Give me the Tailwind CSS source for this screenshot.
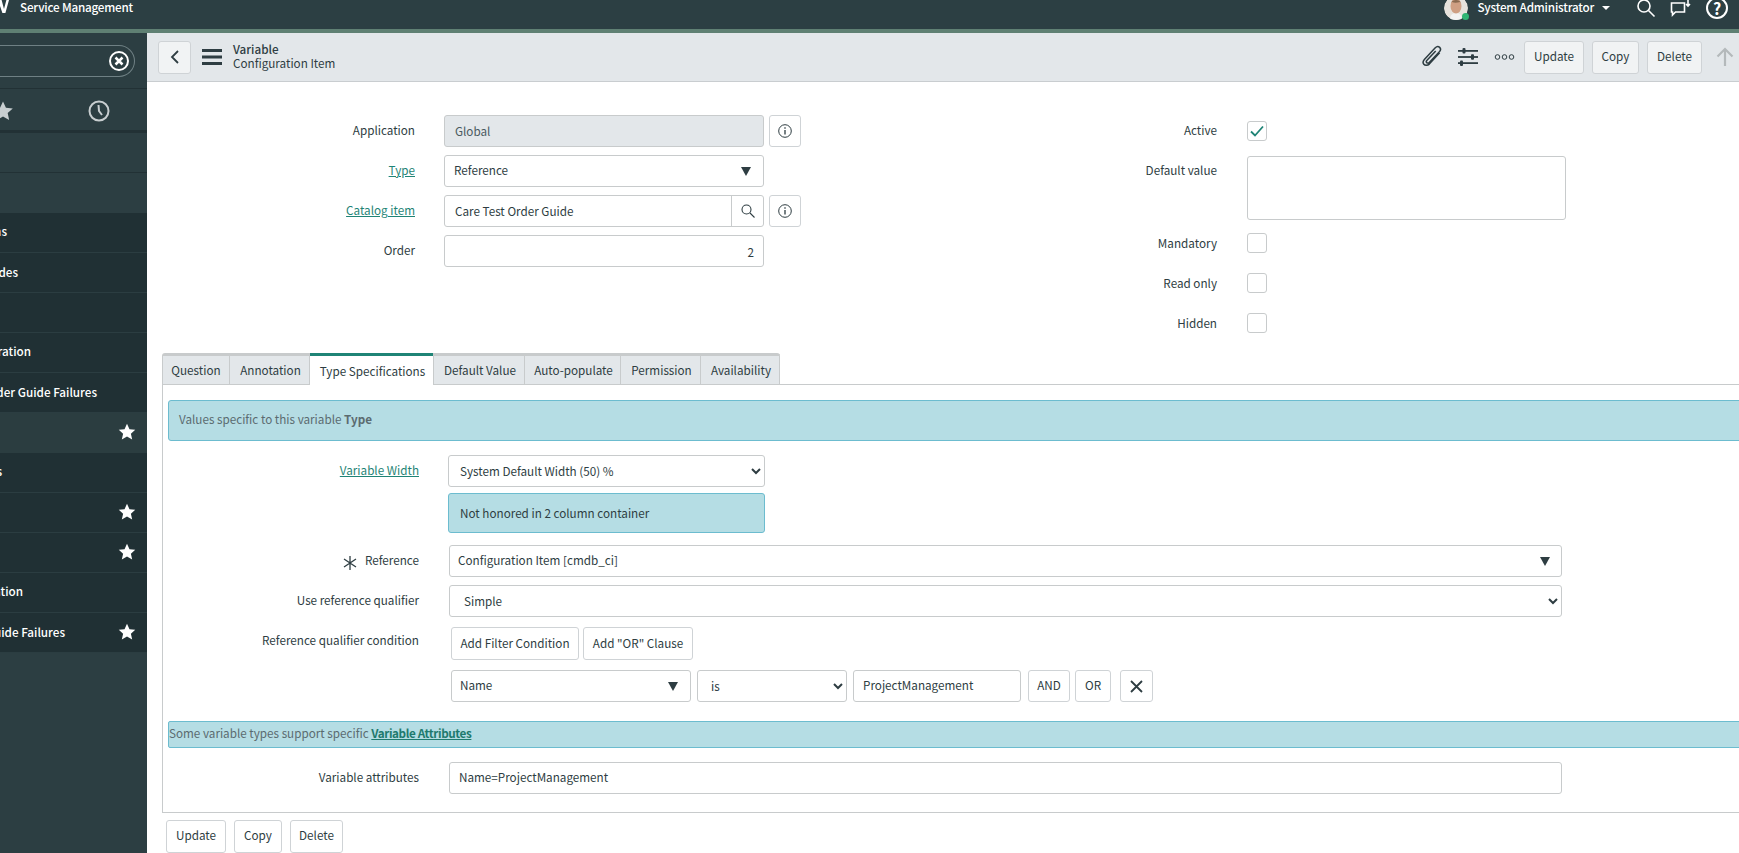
<!DOCTYPE html>
<html lang="en">
<head>
<meta charset="utf-8">
<title>Variable - Configuration Item</title>
<script src="https://cdn.jsdelivr.net/npm/@tailwindcss/browser@4"></script>
</head>
<body class="overflow-hidden">
<div class="w-[1739px] h-[853px] overflow-hidden flex flex-col bg-white text-[#2e3d42] text-[11.7px] leading-[18px] font-['Noto_Sans_CJK_SC','Noto_Sans',sans-serif]">

  <!-- top header -->
  <header class="h-[33px] shrink-0 bg-[#2c3f43] border-b-[4px] border-[#5f8073] overflow-hidden text-white">
    <div class="h-[15px] flex items-center relative">
      <svg class="ml-[-2px] w-[11px] h-[15px] shrink-0" viewBox="0 0 11 15"><path d="M0 0h3.6l2.4 9 2.4-9h2.6l-3.6 13h-3z" fill="#fff"/></svg>
      <span class="ml-[11px] font-medium tracking-[-0.2px] leading-[12px] mt-[-2px]">Service Management</span>
      <div class="ml-auto flex items-center h-[15px]">
        <span class="relative w-[24px] h-[24px] mr-[9px] shrink-0">
          <svg class="w-[24px] h-[24px] rounded-full" viewBox="0 0 24 24"><circle cx="12" cy="12" r="12" fill="#e6e2dc"/><path d="M6 24c0-5 2-7 6-7s6 2 6 7z" fill="#f3f3f3"/><ellipse cx="12" cy="10" rx="5.5" ry="7.5" fill="#cf9f83"/><path d="M7 7c1-4 9-4 10 0l-1-1c-3 1-6 1-8 0z" fill="#8a6a50"/></svg>
          <span class="absolute right-[-1px] bottom-0 w-[7px] h-[7px] rounded-full bg-[#2fb574]"></span>
        </span>
        <span class="font-medium tracking-[-0.2px] leading-[12px] mt-[-2px]">System Administrator</span>
        <span class="ml-[8px] w-0 h-0 border-x-[4px] border-x-transparent border-t-[4px] border-t-white"></span>
        <svg class="ml-[26px] w-[20px] h-[20px]" viewBox="0 0 20 20" fill="none" stroke="#fff" stroke-width="1.6"><circle cx="8" cy="8" r="6"/><path d="M12.5 12.5l6 6"/></svg>
        <svg class="ml-[14px] w-[22px] h-[20px]" viewBox="0 0 22 20" fill="none" stroke="#fff" stroke-width="1.6"><path d="M1.5 5h13v9h-9l-3 3v-3h-1z"/><path d="M18 2v6M16 6l2 2 2-2"/></svg>
        <span class="ml-[14px] mr-[11px] w-[22px] h-[22px] rounded-full border-2 border-white flex items-center justify-center font-bold text-[16px] leading-none">?</span>
      </div>
    </div>
  </header>

  <div class="flex-1 flex min-h-0">
    <!-- sidebar -->
    <aside class="w-[147px] shrink-0 bg-[#2c3e42] overflow-hidden text-white font-medium">
      <div class="h-[56px] border-b border-[#223135] pt-[12px]">
        <div class="h-[32px] w-[135px] rounded-r-full border border-l-0 border-[#6f8084] flex items-center justify-end pr-[5px]">
          <svg class="w-[20px] h-[20px]" viewBox="0 0 20 20" fill="none" stroke="#fff"><circle cx="10" cy="10" r="9" stroke-width="2"/><path d="M6.5 6.5l7 7M13.500 6.500l-7 7" stroke-width="2.500"/></svg>
        </div>
      </div>
      <div class="h-[44px] border-b-[3px] border-[#223135] relative flex items-center">
        <svg class="absolute left-[-8px] top-[11px] w-[22px] h-[22px]" viewBox="0 0 24 24" fill="#c8ced0"><path d="M12 1.500l3.200 7 7.500.8-5.600 5 1.600 7.500-6.700-3.900-6.700 3.900 1.600-7.500-5.600-5 7.500-.8z"/></svg>
        <svg class="absolute left-[88px] top-[11px] w-[22px] h-[22px]" viewBox="0 0 22 22" fill="none" stroke="#c8ced0" stroke-width="2"><circle cx="11" cy="11" r="9.500"/><path d="M10.500 5l.5 6 3 4"/></svg>
      </div>
      <div class="h-[40px] border-b border-[#223135]"></div>
      <div class="h-[40px]"></div>
      <div class="bg-[#203034]">
        <div class="h-[40px] border-b border-[#2b3d41] flex items-center"><span class="w-[7px] whitespace-nowrap flex justify-end mt-[-3px]">ns</span></div>
        <div class="h-[40px] border-b border-[#2b3d41] flex items-center"><span class="w-[18px] whitespace-nowrap flex justify-end mt-[-2px]">des</span></div>
        <div class="h-[40px] border-b border-[#2b3d41]"></div>
        <div class="h-[40px] border-b border-[#2b3d41] flex items-center"><span class="w-[31px] whitespace-nowrap flex justify-end mt-[-3px]">ration</span></div>
        <div class="h-[40px] border-b border-[#2b3d41] flex items-center"><span class="w-[97px] whitespace-nowrap flex justify-end mt-[-2px]">der Guide Failures</span></div>
        <div class="h-[40px] bg-[#2b3d40] flex items-center justify-end pr-[11px]">
          <svg class="w-[18px] h-[18px] mt-[-2px]" viewBox="0 0 24 24" fill="#fff"><path d="M12 1l3.300 7.300 7.700.8-5.800 5.200 1.700 7.700-6.900-4-6.900 4 1.700-7.700-5.800-5.200 7.700-.8z"/></svg>
        </div>
        <div class="h-[40px] border-b border-[#2b3d41] flex items-center"><span class="w-[2px] whitespace-nowrap flex justify-end mt-[-3px]">s</span></div>
        <div class="h-[40px] border-b border-[#2b3d41] flex items-center justify-end pr-[11px]">
          <svg class="w-[18px] h-[18px] mt-[-2px]" viewBox="0 0 24 24" fill="#fff"><path d="M12 1l3.300 7.300 7.700.8-5.800 5.200 1.700 7.700-6.900-4-6.900 4 1.700-7.700-5.800-5.200 7.700-.8z"/></svg>
        </div>
        <div class="h-[40px] border-b border-[#2b3d41] flex items-center justify-end pr-[11px]">
          <svg class="w-[18px] h-[18px] mt-[-2px]" viewBox="0 0 24 24" fill="#fff"><path d="M12 1l3.300 7.300 7.700.8-5.800 5.200 1.700 7.700-6.900-4-6.900 4 1.700-7.700-5.800-5.200 7.700-.8z"/></svg>
        </div>
        <div class="h-[40px] border-b border-[#2b3d41] flex items-center"><span class="w-[23px] whitespace-nowrap flex justify-end mt-[-3px]">ation</span></div>
        <div class="h-[40px] border-b border-[#2b3d41] flex items-center justify-between pr-[11px]"><span class="w-[65px] whitespace-nowrap flex justify-end mt-[-2px]">uide Failures</span>
          <svg class="w-[18px] h-[18px] mt-[-2px]" viewBox="0 0 24 24" fill="#fff"><path d="M12 1l3.300 7.300 7.700.8-5.800 5.200 1.700 7.700-6.900-4-6.900 4 1.700-7.700-5.800-5.200 7.700-.8z"/></svg>
        </div>
      </div>
    </aside>

    <!-- main -->
    <main class="flex-1 min-w-0 flex flex-col">
      <!-- toolbar -->
      <div class="h-[49px] shrink-0 bg-[#e3e7ea] border-b border-[#c9cdd0] flex items-center pl-[11px]">
        <button class="w-[33px] h-[33px] rounded-[3px] border border-[#cfd3d6] bg-[#f1f3f4] flex items-center justify-center">
          <svg class="w-[12px] h-[16px]" viewBox="0 0 12 16" fill="none" stroke="#2e3d42" stroke-width="1.800"><path d="M9 2L3 8l6 6"/></svg>
        </button>
        <svg class="ml-[11px] w-[20px] h-[16px]" viewBox="0 0 20 16" fill="#2e3d42"><rect width="20" height="3"/><rect y="6.500" width="20" height="3"/><rect y="13" width="20" height="3"/></svg>
        <div class="ml-[11px] leading-[14px] mt-[-2px]"><div class="font-medium">Variable</div><div>Configuration Item</div></div>
        <div class="ml-auto flex items-center">
          <svg class="w-[24px] h-[24px] mr-[-1px]" viewBox="0 0 22 22" fill="none" stroke="#2e3d42" stroke-width="1.400"><path d="M18 7l-9.500 10.500c-1.500 1.500-4 1.500-5 .2s-.8-3 .5-4.500L14 2.500c1.300-1.300 3-1.300 4-.3s1 2.700-.2 4L8.500 16c-.7.700-1.800.7-2.300.2s-.5-1.500.2-2.200l8-8.500"/></svg>
          <svg class="ml-[15px] w-[20px] h-[20px]" viewBox="0 0 20 20" fill="#2e3d42"><rect y="3" width="20" height="1.800"/><rect y="9.100" width="20" height="1.800"/><rect y="15.200" width="20" height="1.800"/><rect x="4.500" y="1" width="3" height="5.500" rx="1"/><rect x="13" y="7.200" width="3" height="5.500" rx="1"/><rect x="2" y="13.400" width="3" height="5.500" rx="1"/></svg>
          <svg class="ml-[16px] w-[21px] h-[8px]" viewBox="0 0 21 8" fill="none" stroke="#2e3d42" stroke-width="1"><circle cx="3.500" cy="4" r="2.300"/><circle cx="10.500" cy="4" r="2.300"/><circle cx="17.500" cy="4" r="2.300"/></svg>
          <button class="ml-[9px] w-[60px] h-[33px] rounded-[3px] border border-[#cfd3d6] bg-[#f1f3f4] pb-[2px]">Update</button>
          <button class="ml-[8px] w-[47px] h-[33px] rounded-[3px] border border-[#cfd3d6] bg-[#f1f3f4] pb-[2px]">Copy</button>
          <button class="ml-[8px] w-[55px] h-[33px] rounded-[3px] border border-[#cfd3d6] bg-[#f1f3f4] pb-[2px]">Delete</button>
          <svg class="ml-[14px] mr-[5px] w-[18px] h-[20px]" viewBox="0 0 18 20" fill="none" stroke="#b4b9bb" stroke-width="2.200"><path d="M9 19V2M1.500 9.500L9 2l7.500 7.500"/></svg>
        </div>
      </div>

      <!-- top form -->
      <div class="h-[271px] shrink-0 pt-[33px] flex">
        <div class="w-[654px] shrink-0">
          <div class="flex items-center h-[32px] mb-[8px]">
            <label class="w-[268px] text-right mt-[-2px]">Application</label>
            <div class="ml-[29px] w-[320px] h-[32px] rounded-[3px] border border-[#c8cbcc] bg-[#e3e7ea] flex items-center px-[10px] text-[#4a5a5f]">Global</div>
            <button class="ml-[5px] w-[32px] h-[32px] rounded-[3px] border border-[#cfd3d6] flex items-center justify-center"><svg class="w-[14px] h-[14px]" viewBox="0 0 14 14" fill="none" stroke="#2e3d42"><circle cx="7" cy="7" r="6.300"/><path d="M7 6v4.500M7 3.300v1.400" stroke-width="1.300"/></svg></button>
          </div>
          <div class="flex items-center h-[32px] mb-[8px]">
            <a class="w-[268px] text-right underline text-[#1f8476] mt-[-2px]">Type</a>
            <div class="ml-[29px] w-[320px] h-[32px] rounded-[3px] border border-[#c8cbcc] flex items-center justify-between pl-[9px] pr-[12px]"><span class="mt-[-2px]">Reference</span><span class="w-0 h-0 border-x-[5px] border-x-transparent border-t-[9px] border-t-[#2e3d42]"></span></div>
          </div>
          <div class="flex items-center h-[32px] mb-[8px]">
            <a class="w-[268px] text-right underline text-[#1f8476] mt-[-2px]">Catalog item</a>
            <div class="ml-[29px] w-[320px] h-[32px] rounded-[3px] border border-[#c8cbcc] flex items-center"><span class="flex-1 px-[10px]">Care Test Order Guide</span><span class="w-[32px] h-full border-l border-[#c8cbcc] flex items-center justify-center"><svg class="w-[14px] h-[14px]" viewBox="0 0 14 14" fill="none" stroke="#2e3d42" stroke-width="1.100"><circle cx="5.500" cy="5.500" r="4.500"/><path d="M9 9l4.500 4.500"/></svg></span></div>
            <button class="ml-[5px] w-[32px] h-[32px] rounded-[3px] border border-[#cfd3d6] flex items-center justify-center"><svg class="w-[14px] h-[14px]" viewBox="0 0 14 14" fill="none" stroke="#2e3d42"><circle cx="7" cy="7" r="6.300"/><path d="M7 6v4.500M7 3.300v1.400" stroke-width="1.300"/></svg></button>
          </div>
          <div class="flex items-center h-[32px]">
            <label class="w-[268px] text-right mt-[-2px]">Order</label>
            <div class="ml-[29px] w-[320px] h-[32px] rounded-[3px] border border-[#c8cbcc] flex items-center justify-end px-[9px] pt-px">2</div>
          </div>
        </div>
        <div class="flex-1">
          <div class="flex items-center h-[32px]">
            <label class="w-[416px] text-right mt-[-2px]">Active</label>
            <span class="ml-[30px] w-[20px] h-[20px] rounded-[3px] border border-[#c8cbcc] flex items-center justify-center"><svg class="w-[14px] h-[12px]" viewBox="0 0 14 12" fill="none" stroke="#1f8476" stroke-width="1.800"><path d="M1 6.500l4 4 8-9"/></svg></span>
          </div>
          <div class="flex mt-[9px]">
            <label class="w-[416px] text-right mt-[5px]">Default value</label>
            <div class="ml-[30px] w-[319px] h-[64px] rounded-[3px] border border-[#c8cbcc]"></div>
          </div>
          <div class="flex items-center h-[32px] mt-[7px]">
            <label class="w-[416px] text-right">Mandatory</label>
            <span class="ml-[30px] w-[20px] h-[20px] rounded-[3px] border border-[#c8cbcc]"></span>
          </div>
          <div class="flex items-center h-[32px] mt-[8px]">
            <label class="w-[416px] text-right">Read only</label>
            <span class="ml-[30px] w-[20px] h-[20px] rounded-[3px] border border-[#c8cbcc]"></span>
          </div>
          <div class="flex items-center h-[32px] mt-[8px]">
            <label class="w-[416px] text-right">Hidden</label>
            <span class="ml-[30px] w-[20px] h-[20px] rounded-[3px] border border-[#c8cbcc]"></span>
          </div>
        </div>
      </div>

      <!-- tabs -->
      <div class="ml-[15px] w-[1600px] shrink-0">
        <div class="flex h-[32px] relative z-10">
          <div class="w-[68px] bg-[#e3e7ea] border-t-[3px] border-[#c8cbcc] border-l border-r border-b rounded-tl-[3px] flex items-center justify-center">Question</div>
          <div class="w-[80px] bg-[#e3e7ea] border-t-[3px] border-[#c8cbcc] border-r border-b flex items-center justify-center pl-[2px]">Annotation</div>
          <div class="w-[123px] bg-white border-t-[3px] border-[#1f8476] flex items-center justify-center pl-[2px]">Type Specifications</div>
          <div class="w-[92px] bg-[#e3e7ea] border-t-[3px] border-[#c8cbcc] border-x border-b flex items-center justify-center pl-[2px]">Default Value</div>
          <div class="w-[96px] bg-[#e3e7ea] border-t-[3px] border-[#c8cbcc] border-r border-b flex items-center justify-center pl-[2px]">Auto-populate</div>
          <div class="w-[80px] bg-[#e3e7ea] border-t-[3px] border-[#c8cbcc] border-r border-b flex items-center justify-center pl-[2px]">Permission</div>
          <div class="w-[79px] bg-[#e3e7ea] border-t-[3px] border-[#c8cbcc] border-r border-b rounded-tr-[3px] flex items-center justify-center pl-[2px]">Availability</div>
        </div>
        <div class="mt-[-1px] h-[429px] border border-[#c8cbcc] pt-[15px] pl-[5px]">
          <div class="h-[41px] rounded-[3px] border border-[#6cbccf] bg-[#b5dde4] flex items-center pl-[10px] text-[#5b6b70]"><span class="mt-[-3px]">Values specific to this variable <b class="font-semibold">Type</b></span></div>

          <div class="flex mt-[14px] items-center h-[32px]">
            <a class="w-[251px] text-right underline text-[#1f8476] mt-[-2px]">Variable Width</a>
            <select class="ml-[29px] w-[317px] h-[32px] rounded-[3px] border border-[#c8cbcc] bg-white pl-[7px] pb-[2px]"><option>System Default Width (50) %</option></select>
          </div>
          <div class="ml-[280px] mt-[6px] w-[317px] h-[40px] rounded-[3px] border border-[#6cbccf] bg-[#b5dde4] flex items-center px-[11px]">Not honored in 2 column container</div>

          <div class="flex mt-[12px] items-center h-[32px]">
            <span class="w-[251px] flex justify-end items-center mt-[-2px]"><svg class="mr-[8px] mt-[5px] w-[14px] h-[14px]" viewBox="0 0 14 14" fill="none" stroke="#2e3d42" stroke-width="1.300"><path d="M7 0v14M1 3l12 8M13 3L1 11"/></svg>Reference</span>
            <div class="ml-[30px] w-[1113px] h-[32px] rounded-[3px] border border-[#c8cbcc] flex items-center justify-between pl-[8px] pr-[11px]"><span class="mt-[-2px]">Configuration Item [cmdb_ci]</span><span class="w-0 h-0 border-x-[5px] border-x-transparent border-t-[9px] border-t-[#2e3d42]"></span></div>
          </div>
          <div class="flex mt-[8px] items-center h-[32px]">
            <label class="w-[251px] text-right mt-[-2px]">Use reference qualifier</label>
            <select class="ml-[30px] w-[1113px] h-[32px] rounded-[3px] border border-[#c8cbcc] bg-white pl-[10px] pb-[2px]"><option>Simple</option></select>
          </div>
          <div class="flex mt-[10px] h-[32px]">
            <label class="w-[251px] text-right mt-[4px]">Reference qualifier condition</label>
            <button class="ml-[32px] w-[128px] h-[33px] rounded-[3px] border border-[#cfd3d6] pb-[2px]">Add Filter Condition</button>
            <button class="ml-[4px] w-[110px] h-[33px] rounded-[3px] border border-[#cfd3d6] pb-[2px]">Add "OR" Clause</button>
          </div>
          <div class="flex mt-[11px] h-[32px] ml-[283px]">
            <div class="w-[240px] h-[32px] rounded-[3px] border border-[#c8cbcc] flex items-center justify-between pl-[8px] pr-[12px]"><span class="mt-[-2px]">Name</span><span class="w-0 h-0 border-x-[5px] border-x-transparent border-t-[9px] border-t-[#2e3d42]"></span></div>
            <select class="ml-[6px] w-[150px] h-[32px] rounded-[3px] border border-[#c8cbcc] bg-white pl-[9px] pb-[2px]"><option>is</option></select>
            <div class="ml-[6px] w-[168px] h-[32px] rounded-[3px] border border-[#c8cbcc] flex items-center px-[9px]"><span class="mt-[-2px]">ProjectManagement</span></div>
            <button class="ml-[7px] w-[42px] h-[32px] rounded-[3px] border border-[#cfd3d6] pb-[2px]">AND</button>
            <button class="ml-[5px] w-[36px] h-[32px] rounded-[3px] border border-[#cfd3d6] pb-[2px]">OR</button>
            <button class="ml-[9px] w-[33px] h-[32px] rounded-[3px] border border-[#cfd3d6] flex items-center justify-center"><svg class="w-[13px] h-[13px]" viewBox="0 0 13 13" fill="none" stroke="#2e3d42" stroke-width="1.800"><path d="M1 1l11 11M12 1L1 12"/></svg></button>
          </div>
          <div class="mt-[19px] h-[27px] rounded-[2px] border border-[#6cbccf] bg-[#b5dde4] flex items-center text-[#5b6b70]"><span class="mt-[-4px]">Some variable types support specific <a class="font-semibold tracking-[-0.4px] underline text-[#1f7a6e]">Variable Attributes</a></span></div>
          <div class="flex mt-[14px] items-center h-[32px]">
            <label class="w-[251px] text-right mt-[-2px]">Variable attributes</label>
            <div class="ml-[30px] w-[1113px] h-[32px] rounded-[3px] border border-[#c8cbcc] flex items-center px-[9px]"><span class="mt-[-2px]">Name=ProjectManagement</span></div>
          </div>
        </div>
        <div class="flex mt-[7px] ml-[4px]">
          <button class="w-[60px] h-[33px] rounded-[3px] border border-[#cfd3d6] pb-[4px]">Update</button>
          <button class="ml-[8px] w-[48px] h-[33px] rounded-[3px] border border-[#cfd3d6] pb-[4px]">Copy</button>
          <button class="ml-[8px] w-[53px] h-[33px] rounded-[3px] border border-[#cfd3d6] pb-[4px]">Delete</button>
        </div>
      </div>
    </main>
  </div>
</div>
</body>
</html>
